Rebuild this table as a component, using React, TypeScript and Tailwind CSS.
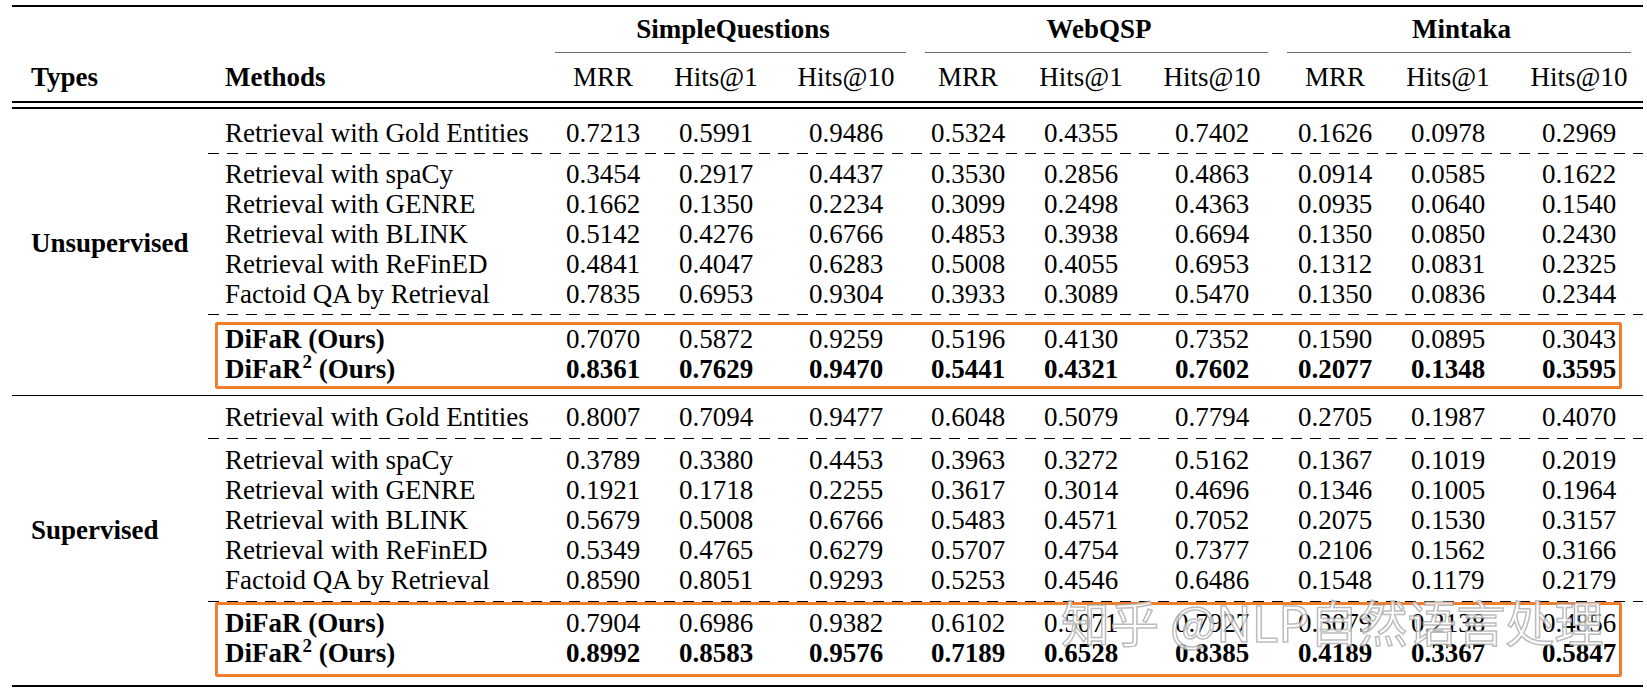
import React from 'react';

const GRID =
  'grid grid-cols-[340px_110px_116px_144px_100px_126px_136px_110px_116px_137px]';

type RowData = { method: React.ReactNode; vals: string[] };

const unsupBase: RowData[] = [
  { method: 'Retrieval with spaCy', vals: ['0.3454', '0.2917', '0.4437', '0.3530', '0.2856', '0.4863', '0.0914', '0.0585', '0.1622'] },
  { method: 'Retrieval with GENRE', vals: ['0.1662', '0.1350', '0.2234', '0.3099', '0.2498', '0.4363', '0.0935', '0.0640', '0.1540'] },
  { method: 'Retrieval with BLINK', vals: ['0.5142', '0.4276', '0.6766', '0.4853', '0.3938', '0.6694', '0.1350', '0.0850', '0.2430'] },
  { method: 'Retrieval with ReFinED', vals: ['0.4841', '0.4047', '0.6283', '0.5008', '0.4055', '0.6953', '0.1312', '0.0831', '0.2325'] },
  { method: 'Factoid QA by Retrieval', vals: ['0.7835', '0.6953', '0.9304', '0.3933', '0.3089', '0.5470', '0.1350', '0.0836', '0.2344'] },
];

const supBase: RowData[] = [
  { method: 'Retrieval with spaCy', vals: ['0.3789', '0.3380', '0.4453', '0.3963', '0.3272', '0.5162', '0.1367', '0.1019', '0.2019'] },
  { method: 'Retrieval with GENRE', vals: ['0.1921', '0.1718', '0.2255', '0.3617', '0.3014', '0.4696', '0.1346', '0.1005', '0.1964'] },
  { method: 'Retrieval with BLINK', vals: ['0.5679', '0.5008', '0.6766', '0.5483', '0.4571', '0.7052', '0.2075', '0.1530', '0.3157'] },
  { method: 'Retrieval with ReFinED', vals: ['0.5349', '0.4765', '0.6279', '0.5707', '0.4754', '0.7377', '0.2106', '0.1562', '0.3166'] },
  { method: 'Factoid QA by Retrieval', vals: ['0.8590', '0.8051', '0.9293', '0.5253', '0.4546', '0.6486', '0.1548', '0.1179', '0.2179'] },
];

const difar2 = (
  <>
    DiFaR<span className="relative -top-[10px] ml-[1px] text-[19px]">2</span> (Ours)
  </>
);

function Row({
  method,
  vals,
  boldName,
  boldVals,
}: RowData & { boldName?: boolean; boldVals?: boolean }) {
  return (
    <div className={`${GRID} h-[30px] leading-[30px]`}>
      <div className={`pl-[17px] whitespace-nowrap ${boldName ? 'font-bold' : ''}`}>{method}</div>
      {vals.map((v, i) => (
        <div
          key={i}
          className={`text-center ${i === 8 ? 'pl-[9px]' : ''} ${boldVals ? 'font-bold' : ''}`}
        >
          {v}
        </div>
      ))}
    </div>
  );
}

function Dash({ h }: { h: string }) {
  return (
    <div className={`${h} flex items-center`}>
      <div className="h-px w-full bg-[image:repeating-linear-gradient(90deg,#000_0px,#000_11px,transparent_11px,transparent_19px)]" />
    </div>
  );
}

function Section({
  label,
  gold,
  rows,
  ours,
  supervised,
}: {
  label: string;
  gold: string[];
  rows: RowData[];
  ours: [string[], string[]];
  supervised?: boolean;
}) {
  return (
    <div className="flex">
      <div className="w-[196px] pl-[19px] pt-[119px] font-bold leading-[30px]">{label}</div>
      <div className="flex-1">
        <div className={supervised ? 'pt-[6px]' : 'pt-[9px]'}>
          <Row method="Retrieval with Gold Entities" vals={gold} />
        </div>
        <Dash h={supervised ? 'h-[13px]' : 'h-[11px]'} />
        {rows.map((r) => (
          <Row key={r.method as string} {...r} />
        ))}
        <Dash h={supervised ? 'h-[12px]' : 'h-[11px]'} />
        <div className={`relative ${supervised ? 'pt-[1px] pb-[17px]' : 'pt-[4px] pb-[11px]'}`}>
          <div
            className={`absolute left-[7px] right-[21px] border-[3px] border-[#ef7f2f] rounded-[2px] ${
              supervised ? '-top-[5px] bottom-[8px]' : 'top-[2px] bottom-[6px]'
            }`}
          />
          <Row method="DiFaR (Ours)" vals={ours[0]} boldName />
          <Row method={difar2} vals={ours[1]} boldName boldVals />
        </div>
      </div>
    </div>
  );
}

export default function App() {
  return (
    <div className="relative w-[1647px] h-[690px] bg-white text-black text-[27px] font-['Liberation_Serif','Times_New_Roman',serif] overflow-hidden">
      <div className="ml-[12px] w-[1631px] pt-[5px]">
        <div className="h-[2px] bg-black" />

        {/* dataset groups */}
        <div className="grid grid-cols-[536px_370px_362px_363px] font-bold leading-[30px]">
          <div />
          {['SimpleQuestions', 'WebQSP', 'Mintaka'].map((g) => (
            <div key={g} className="flex flex-col">
              <div className="h-[45px] pt-[7px] text-center">{g}</div>
              <div className="h-px bg-[#6e6e6e] ml-[7px] mr-[12px]" />
            </div>
          ))}
        </div>

        {/* column heads */}
        <div className="flex h-[48px] pt-[9px] leading-[30px]">
          <div className="w-[196px] pl-[19px] font-bold">Types</div>
          <div className={`flex-1 ${GRID}`}>
            <div className="pl-[17px] font-bold">Methods</div>
            {['MRR', 'Hits@1', 'Hits@10', 'MRR', 'Hits@1', 'Hits@10', 'MRR', 'Hits@1', 'Hits@10'].map((h, i) => (
              <div key={i} className={`text-center ${i === 8 ? 'pl-[9px]' : ''}`}>
                {h}
              </div>
            ))}
          </div>
        </div>
        <div className="h-[2px] bg-black" />
        <div className="h-[4px]" />
        <div className="h-[2px] bg-black" />

        <Section
          label="Unsupervised"
          gold={['0.7213', '0.5991', '0.9486', '0.5324', '0.4355', '0.7402', '0.1626', '0.0978', '0.2969']}
          rows={unsupBase}
          ours={[
            ['0.7070', '0.5872', '0.9259', '0.5196', '0.4130', '0.7352', '0.1590', '0.0895', '0.3043'],
            ['0.8361', '0.7629', '0.9470', '0.5441', '0.4321', '0.7602', '0.2077', '0.1348', '0.3595'],
          ]}
        />
        <div className="h-px bg-black" />
        <Section
          label="Supervised"
          supervised
          gold={['0.8007', '0.7094', '0.9477', '0.6048', '0.5079', '0.7794', '0.2705', '0.1987', '0.4070']}
          rows={supBase}
          ours={[
            ['0.7904', '0.6986', '0.9382', '0.6102', '0.5071', '0.7927', '0.3079', '0.2138', '0.4856'],
            ['0.8992', '0.8583', '0.9576', '0.7189', '0.6528', '0.8385', '0.4189', '0.3367', '0.5847'],
          ]}
        />
        <div className="h-[2px] bg-black" />
      </div>

      {/* site watermark over the table */}
      <div className="absolute left-[1061px] top-[596px] whitespace-nowrap text-[49px] leading-none font-['Noto_Sans_CJK_SC','Noto_Sans',sans-serif] text-[rgba(255,255,255,0.75)] [-webkit-text-stroke:1.5px_rgba(160,160,160,0.7)]">
        知乎 @NLP自然语言处理
      </div>
    </div>
  );
}
